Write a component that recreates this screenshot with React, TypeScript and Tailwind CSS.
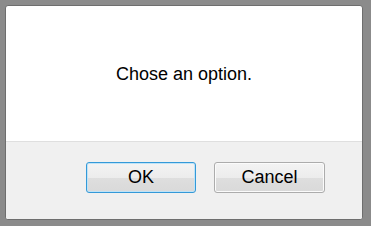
import React from "react";

export default function App() {
  return (
    <div className="w-[371px] h-[226px] bg-[#8b8b8b] pl-[5px] pt-[5px]" style={{ fontFamily: '"Liberation Sans", Arial, sans-serif' }}>
      <div className="w-[358px] h-[215px] flex flex-col border border-[#6e6e6e] rounded-[3px] overflow-hidden bg-white">
        <div className="h-[135px] flex items-center justify-center text-[18px] text-black pt-[1px]">
          Chose an option.
        </div>
        <div className="flex-1 bg-[#f0f0f0] border-t border-[#dfdfdf] flex justify-end items-start pt-[20px] pr-[37px] gap-[18px]">
          <button className="w-[110px] h-[31px] rounded-[3px] border border-[#3399d8] text-[18px] text-black bg-[linear-gradient(#f3f3f3_0%,#ececec_50%,#dedede_52%,#d9d9d9_100%)] shadow-[inset_0_0_0_1px_#bfe3f7]">
            OK
          </button>
          <button className="w-[111px] h-[31px] rounded-[3px] border border-[#acacac] text-[18px] text-black bg-[linear-gradient(#f3f3f3_0%,#ececec_50%,#dedede_52%,#d9d9d9_100%)] shadow-[inset_0_0_0_1px_#fbfbfb]">
            Cancel
          </button>
        </div>
      </div>
    </div>
  );
}
